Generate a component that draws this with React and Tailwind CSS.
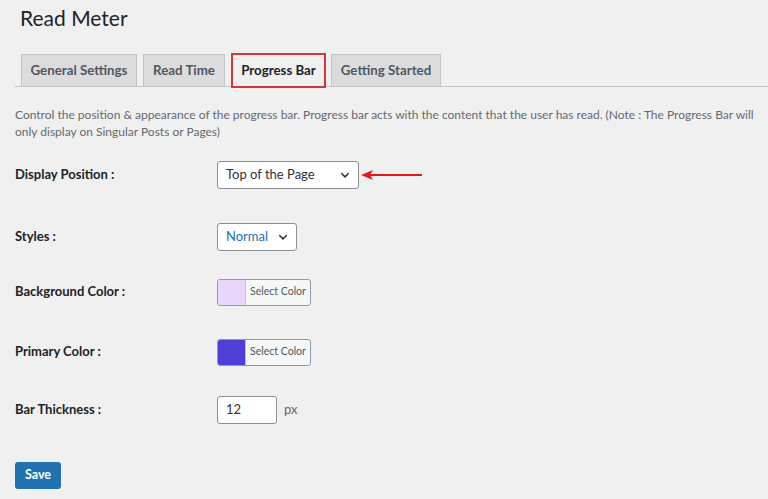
import React from "react";

const font = { fontFamily: 'Lato, "Open Sans", sans-serif' };

function Chevron({ className = "" }) {
  return (
    <svg className={className} width="12" height="12" viewBox="0 0 16 16" fill="none">
      <path d="M3.5 6 L8 10.5 L12.5 6" stroke="#2c3338" strokeWidth="2" strokeLinecap="round" strokeLinejoin="round" />
    </svg>
  );
}

function Row({ label, children, className = "" }) {
  return (
    <div className={`flex h-[28px] items-center ${className}`}>
      <div className="w-[202px] shrink-0 text-[13px] font-bold text-[#1d2327]">{label}</div>
      <div className="flex items-center">{children}</div>
    </div>
  );
}

function ColorBtn({ color }) {
  return (
    <div className="flex h-[27px] w-[94px] overflow-hidden rounded-[3px] border border-[#8c9bb3] bg-[#f6f7f7]">
      <div className="w-[28px] border-r border-[#c3c4c7]" style={{ background: color }} />
      <div className="flex flex-1 items-center justify-center text-[10.5px] text-[#50575e]">Select Color</div>
    </div>
  );
}

const tabs = [
  { t: "General Settings", w: "w-[116px]" },
  { t: "Read Time", w: "w-[82px]" },
  { t: "Progress Bar", w: "w-[95px]" },
  { t: "Getting Started", w: "w-[110px]" },
];

export default function App() {
  return (
    <div className="min-h-[499px] w-[768px] bg-[#f0f0f1] text-[#1d2327]" style={font}>
      <div className="pl-[20px] pt-[4px] text-[21px] leading-[28px] text-[#1d2327]">Read Meter</div>
      <div className="ml-[15px] mt-[21px] flex items-end border-b border-[#c3c4c7] pl-[6px]">
        {tabs.map(({ t, w }) => {
          const active = t === "Progress Bar";
          return (
            <div
              key={t}
              className={
                active
                  ? `-mb-[2px] mr-[5px] flex h-[35px] ${w} items-center justify-center border-2 border-[#d63638] bg-[#f0f0f1] text-[13.3px] font-bold text-[#1d2327]`
                  : `mr-[6px] flex h-[32px] ${w} items-center justify-center border border-b-0 border-[#c3c4c7] bg-[#dcdcde] text-[13.3px] font-bold text-[#50575e]`
              }
            >
              {t}
            </div>
          );
        })}
      </div>
      <div className="pl-[15px] pr-[6px] pt-[19px] text-[12px] leading-[17px] text-[#646970]">
        Control the position &amp; appearance of the progress bar. Progress bar acts with the content that the user has read. (Note : The Progress Bar will only display on Singular Posts or Pages)
      </div>
      <div className="pl-[15px] pt-[21px]">
        <Row label="Display Position :">
          <div className="relative flex h-[28px] w-[142px] items-center justify-between rounded-[3px] border border-[#8c8f94] bg-white pl-[8px] pr-[7px] text-[13px] text-[#2c3338]">
            <span>Top of the Page</span>
            <Chevron />
          </div>
          <svg width="64" height="12" viewBox="0 0 64 12" className="ml-[1px]">
            <line x1="8" y1="6" x2="62" y2="6" stroke="#e3191d" strokeWidth="2" />
            <path d="M1 6 L13 1 L10 6 L13 11 Z" fill="#e3191d" />
          </svg>
        </Row>
        <Row label="Styles :" className="mt-[34px]">
          <div className="flex h-[28px] w-[80px] items-center justify-between rounded-[3px] border border-[#8c8f94] bg-white pl-[8px] pr-[7px] text-[13px] text-[#2271b1]">
            <span>Normal</span>
            <Chevron />
          </div>
        </Row>
        <Row label="Background Color :" className="mt-[27px]">
          <ColorBtn color="#e8d6fd" />
        </Row>
        <Row label="Primary Color :" className="mt-[32px]">
          <ColorBtn color="#4f3fd6" />
        </Row>
        <Row label="Bar Thickness :" className="mt-[30px]">
          <div className="flex h-[28px] w-[60px] items-center rounded-[3px] border border-[#8c8f94] bg-white pl-[8px] text-[13px] text-[#2c3338]">12</div>
          <span className="ml-[7px] text-[13px] text-[#646970]">px</span>
        </Row>
        <div className="mt-[38px] flex h-[27px] w-[46px] items-center justify-center rounded-[3px] bg-[#2271b1] text-[12.5px] font-bold text-white">Save</div>
      </div>
    </div>
  );
}
